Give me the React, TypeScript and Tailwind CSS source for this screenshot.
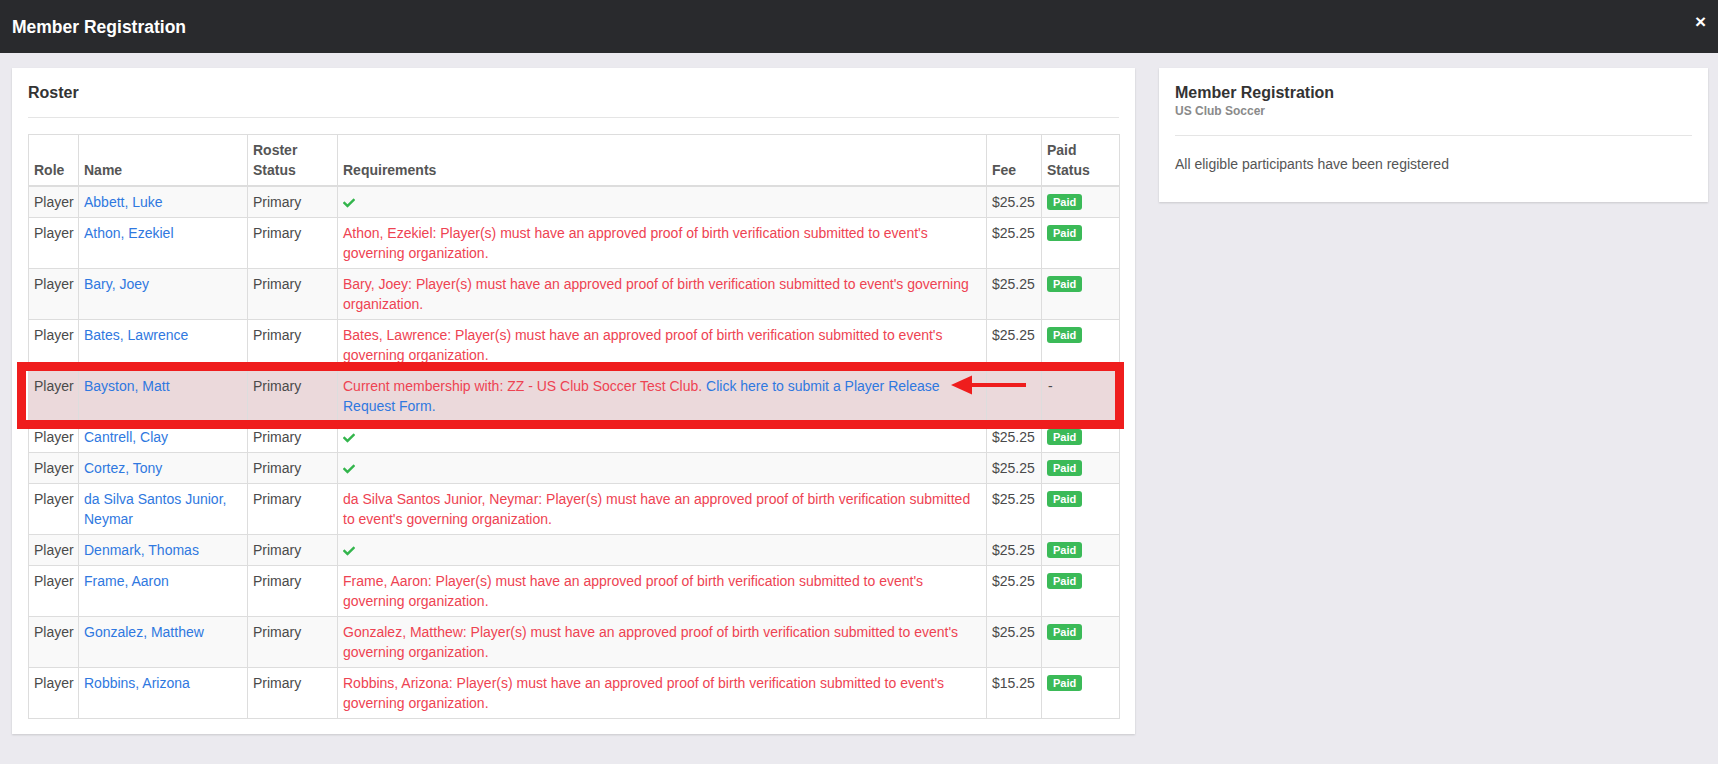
import React from "react";
import { FaCheck } from "react-icons/fa";

type Row = {
  name: string;
  req: React.ReactNode;
  fee: string;
  paid: boolean;
};

const Req = ({ children }: { children: React.ReactNode }) => (
  <span className="text-[#ee4352]">{children}</span>
);

const Ok = () => <FaCheck className="inline-block text-[#33b54c]" size={12} />;

const rows: Row[] = [
  { name: "Abbett, Luke", req: <Ok />, fee: "$25.25", paid: true },
  {
    name: "Athon, Ezekiel",
    req: <Req>Athon, Ezekiel: Player(s) must have an approved proof of birth verification submitted to event's governing organization.</Req>,
    fee: "$25.25",
    paid: true,
  },
  {
    name: "Bary, Joey",
    req: <Req>Bary, Joey: Player(s) must have an approved proof of birth verification submitted to event's governing organization.</Req>,
    fee: "$25.25",
    paid: true,
  },
  {
    name: "Bates, Lawrence",
    req: <Req>Bates, Lawrence: Player(s) must have an approved proof of birth verification submitted to event's governing organization.</Req>,
    fee: "$25.25",
    paid: true,
  },
  {
    name: "Bayston, Matt",
    req: (
      <>
        <Req>Current membership with: ZZ - US Club Soccer Test Club. </Req>
        <a className="text-[#2f78e0] cursor-pointer">Click here to submit a Player Release Request Form.</a>
      </>
    ),
    fee: "",
    paid: false,
  },
  { name: "Cantrell, Clay", req: <Ok />, fee: "$25.25", paid: true },
  { name: "Cortez, Tony", req: <Ok />, fee: "$25.25", paid: true },
  {
    name: "da Silva Santos Junior, Neymar",
    req: <Req>da Silva Santos Junior, Neymar: Player(s) must have an approved proof of birth verification submitted to event's governing organization.</Req>,
    fee: "$25.25",
    paid: true,
  },
  { name: "Denmark, Thomas", req: <Ok />, fee: "$25.25", paid: true },
  {
    name: "Frame, Aaron",
    req: <Req>Frame, Aaron: Player(s) must have an approved proof of birth verification submitted to event's governing organization.</Req>,
    fee: "$25.25",
    paid: true,
  },
  {
    name: "Gonzalez, Matthew",
    req: <Req>Gonzalez, Matthew: Player(s) must have an approved proof of birth verification submitted to event's governing organization.</Req>,
    fee: "$25.25",
    paid: true,
  },
  {
    name: "Robbins, Arizona",
    req: <Req>Robbins, Arizona: Player(s) must have an approved proof of birth verification submitted to event's governing organization.</Req>,
    fee: "$15.25",
    paid: true,
  },
];

const td = "border border-[#dddddd] px-[5px] py-[5px] align-top";
const th = "border border-[#dddddd] border-b-2 px-[5px] py-[5px] align-bottom text-left font-bold text-[#555555]";

function PaidBadge() {
  return (
    <span className="inline-block rounded-[3px] bg-[#3bba58] px-[6px] text-[11px] font-bold leading-[16px] text-white align-[1px]">
      Paid
    </span>
  );
}

export default function App() {
  return (
    <div
      className="h-[764px] w-[1718px] overflow-hidden bg-[#ebeaef] text-[14px] leading-[20px] text-[#4a4a4a]"
      style={{ fontFamily: '"Liberation Sans", Arial, Helvetica, sans-serif' }}
    >
      {/* Modal title bar */}
      <div className="flex h-[53px] items-center justify-between bg-[#292a2d] pl-[12px] pr-[12px]">
        <h1 className="text-[17.5px] font-bold text-white">Member Registration</h1>
        <button className="mb-[11px] text-[19px] font-bold leading-none text-white">×</button>
      </div>

      <div className="flex items-start gap-[24px] pl-[12px] pr-[10px] pt-[15px]">
        {/* Roster card */}
        <div className="w-[1123px] shrink-0 bg-white px-[16px] pb-[15px] pt-[15px] shadow-[0_1px_2px_rgba(0,0,0,0.15)]">
          <h2 className="text-[16px] font-bold leading-[20px] text-[#333333]">Roster</h2>
          <hr className="mb-[16px] mt-[14px] border-t border-[#e5e5e5]" />

          <div className="relative">
            <table className="w-[1091px] table-fixed border-collapse">
              <colgroup>
                <col className="w-[50px]" />
                <col className="w-[169px]" />
                <col className="w-[90px]" />
                <col className="w-[649px]" />
                <col className="w-[55px]" />
                <col className="w-[78px]" />
              </colgroup>
              <thead>
                <tr>
                  <th className={th}>Role</th>
                  <th className={th}>Name</th>
                  <th className={th}>
                    Roster
                    <br />
                    Status
                  </th>
                  <th className={th}>Requirements</th>
                  <th className={th}>Fee</th>
                  <th className={th}>
                    Paid
                    <br />
                    Status
                  </th>
                </tr>
              </thead>
              <tbody>
                {rows.map((r, i) => {
                  const bg = r.name === "Bayston, Matt" ? "bg-[#ebd9db]" : i % 2 === 0 ? "bg-[#f9f9f9]" : "bg-white";
                  return (
                    <tr key={r.name} className={bg}>
                      <td className={td}>Player</td>
                      <td className={td}>
                        <a className="cursor-pointer text-[#2f78e0]">{r.name}</a>
                      </td>
                      <td className={td}>Primary</td>
                      <td className={td}>{r.req}</td>
                      <td className={td}>{r.fee}</td>
                      <td className={td}>{r.paid ? <PaidBadge /> : <span className="pl-[1px]">-</span>}</td>
                    </tr>
                  );
                })}
              </tbody>
            </table>

            {/* Highlight frame around the release row */}
            <div className="pointer-events-none absolute left-[-11px] top-[228px] h-[67px] w-[1107px] border-[9px] border-[#ef1d1d]" />

            {/* Pointer arrow */}
            <svg
              className="pointer-events-none absolute left-[923px] top-[241px]"
              width="76"
              height="20"
              viewBox="0 0 76 20"
            >
              <polygon points="0,10 21,0.5 21,19.5" fill="#ef1d1d" />
              <rect x="19" y="8" width="56" height="4" fill="#ef1d1d" />
            </svg>
          </div>
        </div>

        {/* Summary card */}
        <div className="flex-1 bg-white px-[16px] pb-[28px] pt-[15px] shadow-[0_1px_2px_rgba(0,0,0,0.15)]">
          <h2 className="text-[16px] font-bold leading-[20px] text-[#333333]">Member Registration</h2>
          <div className="text-[12px] font-bold leading-[16px] text-[#8a8a8a]">US Club Soccer</div>
          <hr className="mb-[18px] mt-[16px] border-t border-[#e5e5e5]" />
          <p className="text-[14px] leading-[20px] text-[#555555]">All eligible participants have been registered</p>
        </div>
      </div>
    </div>
  );
}
